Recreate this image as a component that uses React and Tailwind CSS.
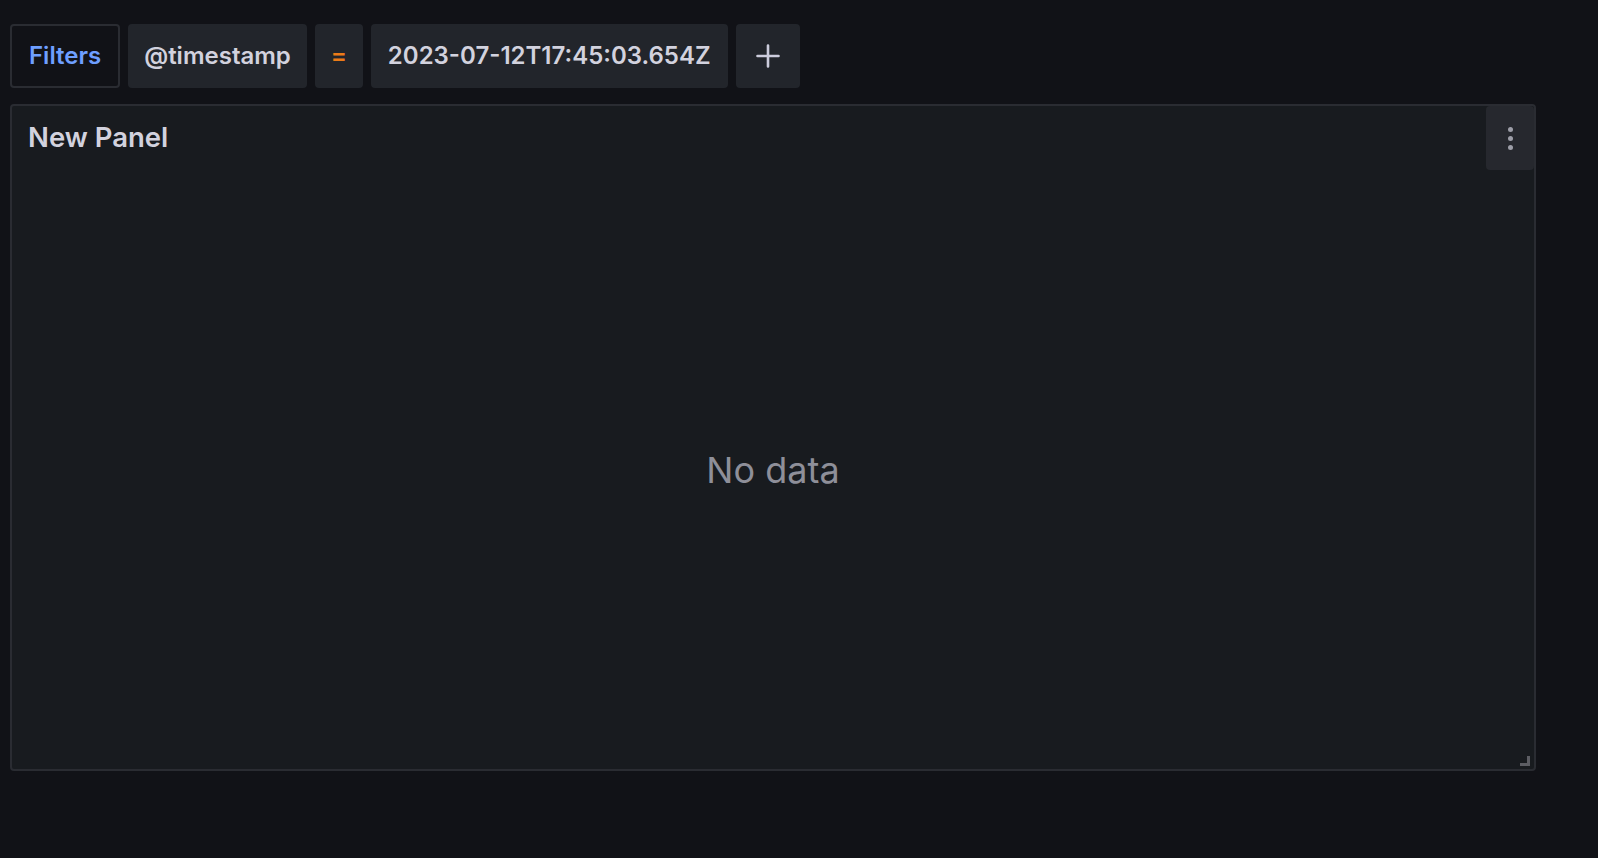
import React from 'react';

const Chip = ({ children, className = '' }) => (
    <div className={`h-16 flex items-center justify-center rounded-[4px] bg-[#22252b] text-[#d2d2de] ${className}`}>
        {children}
    </div>
);

const App = () => {
    return (
        <div
            className="w-[1598px] h-[858px] bg-[#111217] pl-[10px] pt-6 flex flex-col"
            style={{ fontFamily: 'Inter, "Noto Sans", sans-serif' }}
        >
            <div className="flex items-center gap-2 text-[24px] font-semibold">
                <div className="h-16 px-[17px] flex items-center rounded-[4px] border-2 border-[#2a2c32] text-[#6e9fff]">
                    Filters
                </div>
                <Chip className="px-[16px]">@timestamp</Chip>
                <Chip className="w-12 text-[#eb7b18]">=</Chip>
                <Chip className="px-[17px]">2023-07-12T17:45:03.654Z</Chip>
                <Chip className="w-16">
                    <svg width="24" height="24" viewBox="0 0 24 24" fill="none">
                        <path d="M12 1.5v21M1.5 12h21" stroke="#ccccdc" strokeWidth="2.6" strokeLinecap="round" />
                    </svg>
                </Chip>
            </div>

            <div className="mt-4 w-[1526px] h-[667px] rounded-[4px] border-2 border-[#2a2c32] bg-[#181b1f] flex flex-col relative">
                <div className="h-16 flex items-center justify-between pl-4">
                    <span className="text-[27.5px] font-semibold text-[#d2d2de]">New Panel</span>
                    <div className="w-12 h-16 rounded-[4px] bg-[#26282e] flex flex-col items-center justify-center gap-[4px]">
                        <span className="w-[5px] h-[5px] rounded-full bg-[#9d9ea8]" />
                        <span className="w-[5px] h-[5px] rounded-full bg-[#9d9ea8]" />
                        <span className="w-[5px] h-[5px] rounded-full bg-[#9d9ea8]" />
                    </div>
                </div>
                <div className="flex-1 flex items-center justify-center">
                    <span className="text-[36px] text-[#8e8f99]">No data</span>
                </div>
                <svg className="absolute right-[4px] bottom-[3px]" width="10" height="10" viewBox="0 0 10 10">
                    <path d="M7 0h3v10H0V7h7z" fill="#5c5d63" />
                </svg>
            </div>
        </div>
    );
};

export default App;
